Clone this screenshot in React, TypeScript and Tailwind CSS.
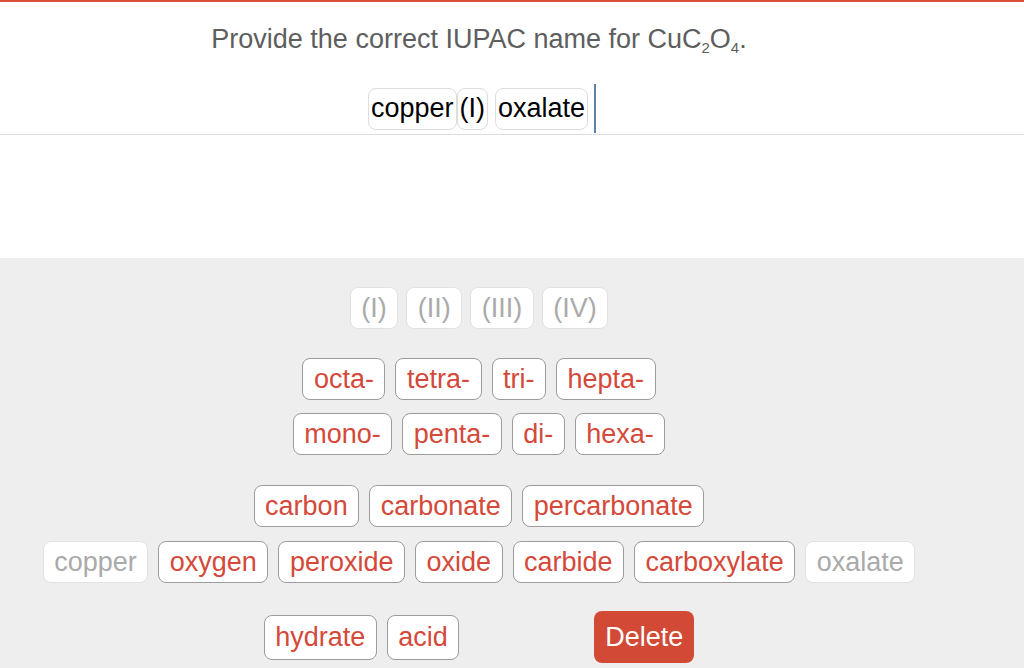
const romans = ["(I)", "(II)", "(III)", "(IV)"];
const prefixRows = [
  ["octa-", "tetra-", "tri-", "hepta-"],
  ["mono-", "penta-", "di-", "hexa-"],
];
const wordRows: { label: string; used?: boolean }[][] = [
  [{ label: "carbon" }, { label: "carbonate" }, { label: "percarbonate" }],
  [
    { label: "copper", used: true },
    { label: "oxygen" },
    { label: "peroxide" },
    { label: "oxide" },
    { label: "carbide" },
    { label: "carboxylate" },
    { label: "oxalate", used: true },
  ],
];

function Tile({ label, used }: { label: string; used?: boolean }) {
  return (
    <button
      className={
        used
          ? "h-[42px] rounded-[8px] border border-[#e2e2e2] bg-white px-[10.5px] text-[27px] leading-none text-[#aaaaaa]"
          : "h-[42px] rounded-[8px] border border-[#9c9c9c] bg-white px-[10.5px] text-[27px] leading-none text-[#d4493a]"
      }
    >
      {label}
    </button>
  );
}

export default function App() {
  return (
    <div
      className="flex h-[668px] w-[1024px] flex-col overflow-hidden bg-white"
      style={{ fontFamily: '"Liberation Sans", Arial, sans-serif' }}
    >
      <div className="h-[258px] shrink-0 border-t-2 border-[#dc5039] bg-white">
        <div className="h-[133px] border-b border-[#dddddd]">
          <div className="flex w-[958px] flex-col items-center">
            <h1 className="mt-[22px] text-[27px] leading-[31px] text-[#5e5e5e]">
              Provide the correct IUPAC name for CuC
              <sub className="-bottom-[5px] text-[15px]">2</sub>O
              <sub className="-bottom-[5px] text-[15px]">4</sub>.
            </h1>
            <div className="mt-[29px] flex items-center pl-[6px]">
              <span className="flex h-[42px] items-center rounded-[8px] border border-[#dddddd] bg-white px-[2px] text-[27px] text-black">
                copper
              </span>
              <span className="flex h-[42px] items-center rounded-[8px] border border-[#dddddd] bg-white px-[2px] text-[27px] text-black">
                (I)
              </span>
              <span className="ml-[7px] flex h-[42px] items-center rounded-[8px] border border-[#dddddd] bg-white px-[2px] text-[27px] text-black">
                oxalate
              </span>
              <span className="ml-[6px] h-[49px] w-[2px] bg-[#5d80a8]" />
            </div>
          </div>
        </div>
      </div>

      <div className="flex-1 bg-[#eeeeee]">
        <div className="flex w-[958px] flex-col items-center pt-[29px]">
          <div className="flex gap-[8px]">
            {romans.map((r) => (
              <Tile key={r} label={r} used />
            ))}
          </div>

          <div className="mt-[29px] flex flex-col items-center gap-[13px]">
            {prefixRows.map((row, i) => (
              <div key={i} className="flex gap-[10px]">
                {row.map((p) => (
                  <Tile key={p} label={p} />
                ))}
              </div>
            ))}
          </div>

          <div className="mt-[30px] flex flex-col items-center gap-[14px]">
            {wordRows.map((row, i) => (
              <div key={i} className="flex gap-[10px]">
                {row.map((w) => (
                  <Tile key={w.label} label={w.label} used={w.used} />
                ))}
              </div>
            ))}
          </div>

          <div className="mt-[28px] flex items-center gap-[10px]">
            <button className="h-[45px] rounded-[8px] border border-[#9c9c9c] bg-white px-[10.5px] text-[27px] leading-none text-[#d4493a]">
              hydrate
            </button>
            <button className="h-[45px] rounded-[8px] border border-[#9c9c9c] bg-white px-[10.5px] text-[27px] leading-none text-[#d4493a]">
              acid
            </button>
            <button className="ml-[125px] h-[52px] w-[100px] rounded-[8px] bg-[#d24a35] text-[27px] leading-none text-white">
              Delete
            </button>
          </div>
        </div>
      </div>
    </div>
  );
}
